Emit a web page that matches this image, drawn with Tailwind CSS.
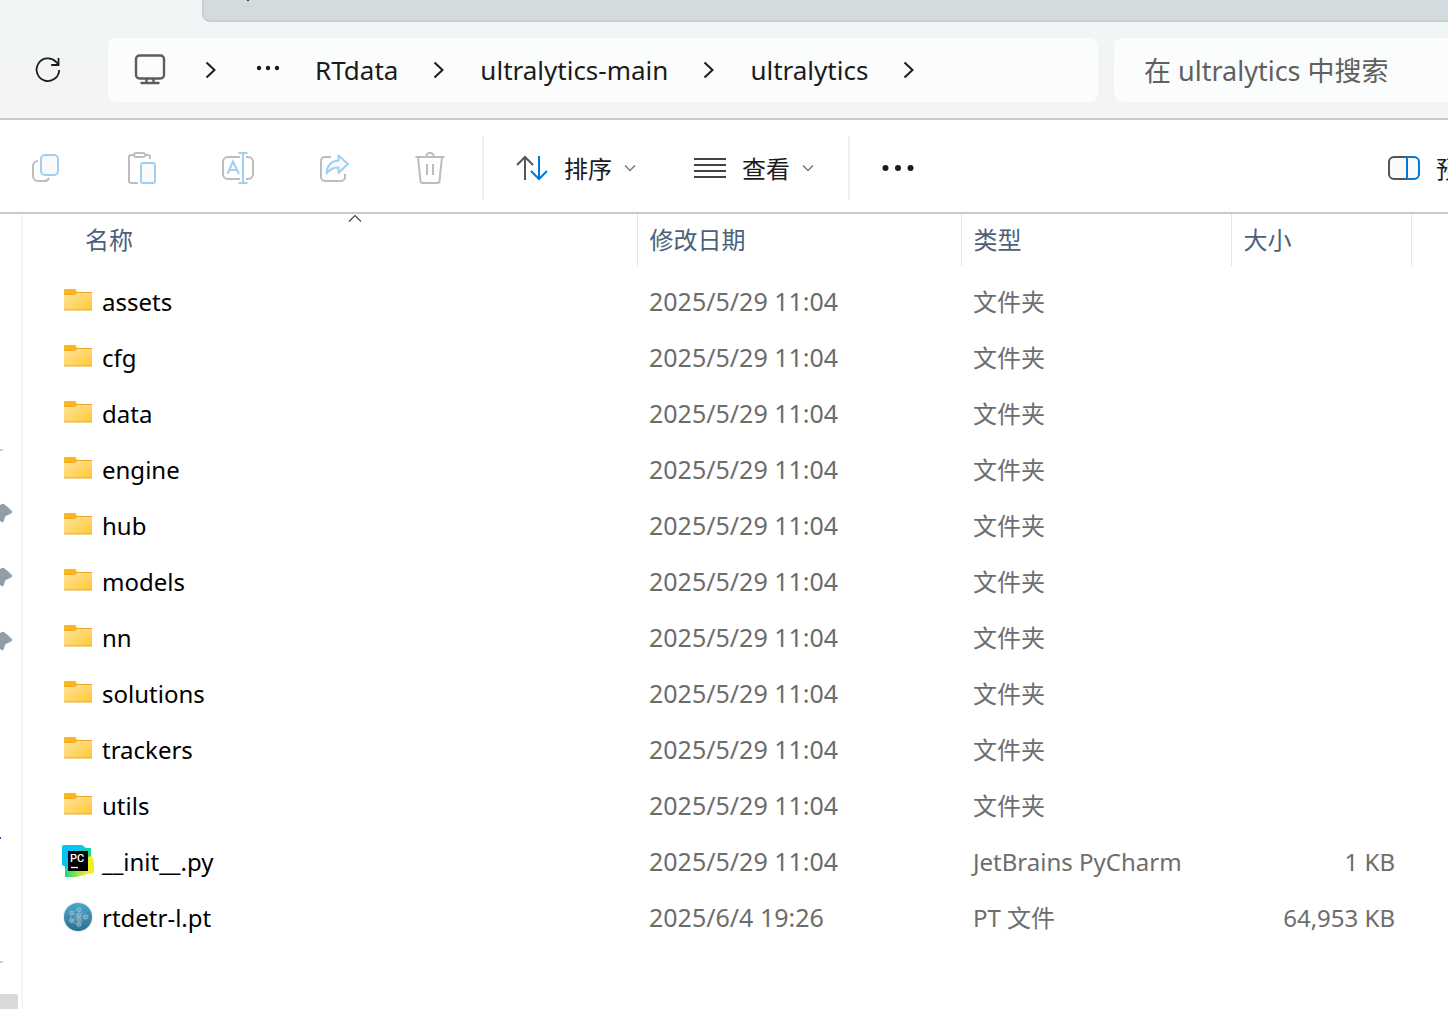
<!DOCTYPE html>
<html lang="zh-CN">
<head>
    <meta charset="UTF-8">
    <meta name="viewport" content="width=device-width, initial-scale=1.0">
    <script src="https://cdn.jsdelivr.net/npm/@tailwindcss/browser@4"></script>
    <title>ultralytics</title>
</head>
<body class="h-screen overflow-hidden flex flex-col bg-white text-[#1b1b1b] font-['Noto_Sans','Noto_Sans_CJK_SC',sans-serif]">

    <!-- shared icons -->
    <svg class="absolute size-0">
        <linearGradient id="folderFill" x1="0" y1="0" x2="1" y2="1">
            <stop offset="0" stop-color="#ffe49b" />
            <stop offset="1" stop-color="#ffc937" />
        </linearGradient>
        <symbol id="crumb" viewBox="0 0 12 18">
            <path d="M1.5 1.5 9.5 9l-8 7.5" fill="none" stroke="#1b1b1b" stroke-width="2" />
        </symbol>
        <symbol id="down" viewBox="0 0 12 8">
            <path d="M1 1.5 6 6.5 11 1.5" fill="none" stroke="#777" stroke-width="1.4" />
        </symbol>
        <symbol id="pin" viewBox="0 0 12 20">
            <path d="M0 2.5C1 1 3 0 4.5 1.5L11 7c2 2 .8 3.600-1 4l-4 2c-1 .5-1.200 1.500-1.500 3l-1.500 3.500L0 18z" fill="#939da4" />
        </symbol>
    </svg>

    <!-- tab strip -->
    <header class="bg-linear-to-b from-[#f1f4f5] to-[#f3f4f4] border-b-2 border-[#c6cbcb]">
        <div class="ml-[202px] h-[22px] rounded-bl-lg border-l-2 border-b-2 border-[#c8cfd1] bg-[#d4dbde] overflow-hidden">
            <div class="ml-[43px] h-px w-[2px] bg-[#333]"></div>
        </div>

        <!-- address bar -->
        <div class="flex items-center pt-4 pb-4">
            <button class="w-[108px] shrink-0 h-16 pl-8" aria-label="刷新">
                <svg class="size-8" viewBox="0 0 32 32" fill="none" stroke="#1b1b1b" stroke-width="1.800">
                    <path d="M27.200 16a11.300 11.300 0 1 1-3.200-8.200l2.500 2.600" />
                    <path d="M26.500 4v7h-7.300" />
                </svg>
            </button>
            <nav class="flex-1 min-w-0 h-16 rounded-lg bg-[#fbfdfc] flex items-center gap-[35px] pl-[26px] text-[26px] whitespace-nowrap">
                <button class="shrink-0" aria-label="此电脑">
                    <svg class="size-8" viewBox="0 0 32 32" fill="none" stroke="#5c5c5c" stroke-width="2.400">
                        <rect x="2" y="1.500" width="28" height="23" rx="3.500" />
                        <path d="M12.500 25v4M19.500 25v4M7.500 29h17" stroke-linecap="round" />
                    </svg>
                </button>
                <svg class="w-3 h-[18px] shrink-0 ml-1"><use href="#crumb" /></svg>
                <button class="shrink-0 ml-1" aria-label="更多位置">
                    <svg class="w-6 h-8" viewBox="0 0 24 32" fill="#1b1b1b">
                        <circle cx="3" cy="14" r="2.200" /><circle cx="12" cy="14" r="2.200" /><circle cx="21" cy="14" r="2.200" />
                    </svg>
                </button>
                <a href="#">RTdata</a>
                <svg class="w-3 h-[18px] shrink-0"><use href="#crumb" /></svg>
                <a href="#">ultralytics-main</a>
                <svg class="w-3 h-[18px] shrink-0"><use href="#crumb" /></svg>
                <a href="#">ultralytics</a>
                <svg class="w-3 h-[18px] shrink-0"><use href="#crumb" /></svg>
            </nav>
            <input type="text" aria-label="搜索" placeholder="在 ultralytics 中搜索" class="ml-4 w-[334px] shrink-0 h-16 rounded-l-lg bg-[#fbfdfc] pl-[30px] text-[27px] placeholder:text-[#606060] outline-none">
        </div>
    </header>

    <!-- command bar -->
    <div class="flex items-center h-[94px] shrink-0 pl-[14px] pt-1 border-b-2 border-[#c8caca] text-2xl whitespace-nowrap overflow-hidden">
        <div class="flex gap-8 shrink-0 text-[#bdbdbd]">
            <button class="size-16 grid place-items-center" aria-label="复制">
                <svg class="size-8" viewBox="0 0 32 32" fill="none" stroke="currentColor" stroke-width="2">
                    <path d="M8 9a5 5 0 0 0-5 5v10a5 5 0 0 0 5 5h7a5 5 0 0 0 4-3" />
                    <rect x="11" y="3" width="17" height="20" rx="4" stroke="#a0cff0" fill="#fafafa" />
                </svg>
            </button>
            <button class="size-16 grid place-items-center" aria-label="粘贴">
                <svg class="size-8" viewBox="0 0 32 32" fill="none" stroke="currentColor" stroke-width="2">
                    <path d="M8 3H5a2 2 0 0 0-2 2v24a2 2 0 0 0 2 2h7M19 3h3a2 2 0 0 1 2 2v2" />
                    <rect x="8" y="1" width="11" height="4" rx="2" />
                    <rect x="15" y="11" width="14" height="20" rx="2" stroke="#a0cff0" fill="#fafafa" />
                </svg>
            </button>
            <button class="size-16 grid place-items-center" aria-label="重命名">
                <svg class="size-8" viewBox="0 0 32 32" fill="none" stroke="currentColor" stroke-width="2">
                    <path d="M18 5H6a5 5 0 0 0-5 5v12a5 5 0 0 0 5 5h12M24 5h2a5 5 0 0 1 5 5v12a5 5 0 0 1-5 5h-2" />
                    <path d="M5.500 22 11 9.500 17 22M7.500 18h7.500M21 1v30M16.500 1h9M16.500 31h9" stroke="#a0cff0" />
                </svg>
            </button>
            <button class="size-16 grid place-items-center" aria-label="共享">
                <svg class="size-8" viewBox="0 0 32 32" fill="none" stroke="currentColor" stroke-width="2">
                    <path d="M13 5H7a4 4 0 0 0-4 4v16a4 4 0 0 0 4 4h16a4 4 0 0 0 4-4v-3" />
                    <path d="M20.500 3.500 30 12l-9.500 9v-5.500c-5 0-9 2-12 6C9 14 13 9 20.500 8.500z" stroke="#a0cff0" stroke-linejoin="round" fill="#fafafa" />
                </svg>
            </button>
            <button class="size-16 grid place-items-center" aria-label="删除">
                <svg class="size-8" viewBox="0 0 32 32" fill="none" stroke="currentColor" stroke-width="2">
                    <path d="M1.500 5h29M12 5c0-5.500 8-5.500 8 0M4 5l2.500 24a2 2 0 0 0 2 2h15a2 2 0 0 0 2-2L28 5M13 12v11M19 12v11" />
                </svg>
            </button>
        </div>

        <div class="ml-5 w-[2px] h-16 shrink-0 bg-[#efefef]"></div>

        <button class="ml-8 h-16 flex items-center shrink-0">
            <svg class="size-8 mr-4" viewBox="0 0 32 32" fill="none" stroke-width="2">
                <path d="M1 13 9 5l8 8M9 5v23" stroke="#555" />
                <path d="M15 19l8 8 8-8M23 27V4" stroke="#0078d4" />
            </svg>
            <span class="pt-[2px]">排序</span>
            <svg class="w-3 h-2 ml-3"><use href="#down" /></svg>
        </button>
        <button class="ml-[58px] h-16 flex items-center shrink-0">
            <svg class="size-8 mr-4" viewBox="0 0 32 32" stroke="#444" stroke-width="2">
                <path d="M0 7h32M0 13h32M0 19h32M0 25h32" />
            </svg>
            <span class="pt-[2px]">查看</span>
            <svg class="w-3 h-2 ml-3"><use href="#down" /></svg>
        </button>

        <div class="ml-[34px] w-[2px] h-16 shrink-0 bg-[#efefef]"></div>

        <button class="ml-8 h-16 shrink-0" aria-label="查看更多">
            <svg class="size-8" viewBox="0 0 32 32" fill="#1b1b1b">
                <circle cx="3.500" cy="16" r="3" /><circle cx="16" cy="16" r="3" /><circle cx="28.500" cy="16" r="3" />
            </svg>
        </button>

        <!-- label runs past the window edge -->
        <div class="ml-auto w-[60px] shrink-0 overflow-hidden">
            <button class="h-16 flex items-center">
                <svg class="size-8 mr-4 shrink-0" viewBox="0 0 32 32" fill="#fafafa" stroke-width="2">
                    <path d="M19 5H6a5 5 0 0 0-5 5v12a5 5 0 0 0 5 5h13" stroke="#555" />
                    <path d="M19 5h7a5 5 0 0 1 5 5v12a5 5 0 0 1-5 5h-7z" stroke="#0078d4" />
                </svg>
                <span class="pt-[2px]">预览</span>
            </button>
        </div>
    </div>

    <div class="flex flex-1 min-h-0">
        <!-- navigation pane, mostly scrolled out of view -->
        <aside class="w-[23px] shrink-0 border-r-2 border-[#f6f6f6] overflow-hidden flex flex-col">
            <div class="mt-[235px] w-[3px] h-[2px] shrink-0 bg-[#d0d0d0]"></div>
            <div class="mt-[52px] flex flex-col gap-11 shrink-0">
                <svg class="w-3 h-5"><use href="#pin" /></svg>
                <svg class="w-3 h-5"><use href="#pin" /></svg>
                <svg class="w-3 h-5"><use href="#pin" /></svg>
            </div>
            <div class="mt-[186px] w-px h-[2px] shrink-0 bg-[#0a63b8]"></div>
            <div class="mt-[122px] w-[3px] h-[2px] shrink-0 bg-[#d0d0d0]"></div>
            <div class="mt-[31px] w-[18px] flex-1 rounded-tr-xs bg-[#d9d9d9]"></div>
        </aside>

        <main class="flex-1 min-w-0 overflow-hidden">
            <table class="w-full table-fixed text-2xl text-[#6d6d6d] whitespace-nowrap">
                <thead>
                    <tr class="h-[52px] text-left text-[#4c607a]">
                        <th class="relative w-[614px] pl-[62px] font-normal border-r border-[#e5e5e5]">
                            名称
                            <svg class="absolute top-0 left-[325px] w-[14px] h-2" viewBox="0 0 14 8" fill="none" stroke="#444" stroke-width="1.200">
                                <path d="M1 7.500 7 1.500l6 6" />
                            </svg>
                        </th>
                        <th class="w-[324px] pl-3 font-normal border-r border-[#e5e5e5]">修改日期</th>
                        <th class="w-[270px] pl-3 font-normal border-r border-[#e5e5e5]">类型</th>
                        <th class="w-[180px] pl-3 font-normal border-r border-[#e5e5e5]">大小</th>
                        <th></th>
                    </tr>
                </thead>
                <tbody id="files" class="before:block before:h-2 before:content-['']"></tbody>
            </table>
        </main>
    </div>

    <script>
        const icons = {
            folder: `<svg class="w-8 h-8 mb-1 shrink-0" viewBox="0 0 32 32">
                <path d="M2 7a2 2 0 0 1 2-2h8q2 0 3 3h15v18H2z" fill="#e9a820" />
                <path d="M2 7a2 2 0 0 1 2-2h8q2 0 2.500 3q-.5 2-2.500 2H2z" fill="#fbb917" />
                <path d="M2 11h10q1.500 0 3-2h15v16a1 1 0 0 1-1 1H3a1 1 0 0 1-1-1z" fill="url(#folderFill)" />
                <path d="M2 26h28" stroke="#e8ac28" />
            </svg>`,
            pycharm: `<svg class="w-8 h-8 mb-[2px] shrink-0" viewBox="0 0 32 32">
                <linearGradient id="pcBlue" x1="0" y1="0" x2="1" y2="0.300"><stop offset=".5" stop-color="#07c3f2" /><stop offset="1" stop-color="#21d789" /></linearGradient>
                <linearGradient id="pcGreen" x1="0" y1="0" x2="1" y2="0"><stop offset="0" stop-color="#0bdc84" /><stop offset=".6" stop-color="#d6e82b" /><stop offset="1" stop-color="#fcf84a" /></linearGradient>
                <path d="M3 20h23l3-12 3 10v10l-6 1-12 3H3z" fill="url(#pcGreen)" />
                <path d="M0 2a2 2 0 0 1 2-2h18l4 3h5v12H6v8L0 20z" fill="url(#pcBlue)" />
                <path d="M29 11l3 6v11l-6 1V12z" fill="#f5ee1f" />
                <path d="M6 6h20v20H6z" fill="#000" />
                <text x="8" y="17" font-family="Roboto" font-size="11" font-weight="500" fill="#fff">PC</text>
                <path d="M9 22.500h7" stroke="#fff" stroke-width="1.300" />
            </svg>`,
            model: `<svg class="w-8 h-8 mb-[2px] shrink-0" viewBox="0 0 32 32" fill="none">
                <linearGradient id="ptBlue" x1="0" y1="0" x2="0" y2="1"><stop offset="0" stop-color="#49a8c8" /><stop offset="1" stop-color="#2d6f96" /></linearGradient>
                <circle cx="16" cy="16" r="15" fill="#e4eaee" />
                <circle cx="16" cy="16" r="14" fill="url(#ptBlue)" />
                <g stroke="#8fb3c6" stroke-width="1.100">
                    <path d="M9 12l8-4 7 8-7 8-8-4 8-6-8-2v8l8-2-8-6M17 8v16M17 14l7 2-7 2" stroke-width=".7" />
                    <circle cx="17" cy="8.500" r="1.900" /><circle cx="9.500" cy="12" r="1.900" /><circle cx="9.500" cy="19.500" r="1.900" />
                    <circle cx="17" cy="14" r="1.900" /><circle cx="17" cy="18.500" r="1.900" /><circle cx="24" cy="16" r="1.900" /><circle cx="17" cy="23.500" r="1.900" />
                </g>
            </svg>`
        };

        const files = ['assets', 'cfg', 'data', 'engine', 'hub', 'models', 'nn', 'solutions', 'trackers', 'utils']
            .map(name => ({ name, icon: 'folder', date: '2025/5/29 11:04', type: '文件夹', size: '' }));
        files.push({ name: '__init__.py', icon: 'pycharm', date: '2025/5/29 11:04', type: 'JetBrains PyCharm', size: '1 KB' });
        files.push({ name: 'rtdetr-l.pt', icon: 'model', date: '2025/6/4 19:26', type: 'PT 文件', size: '64,953 KB' });

        document.getElementById('files').innerHTML = files.map(file => `
            <tr class="h-14">
                <td class="pl-[39px]">
                    <div class="flex items-center gap-2 text-black">${icons[file.icon]}<span>${file.name}</span></div>
                </td>
                <td class="pl-3 text-[25px]">${file.date}</td>
                <td class="pl-3">${file.type}</td>
                <td class="pr-4 text-right">${file.size}</td>
                <td></td>
            </tr>`).join('');
    </script>
</body>
</html>
